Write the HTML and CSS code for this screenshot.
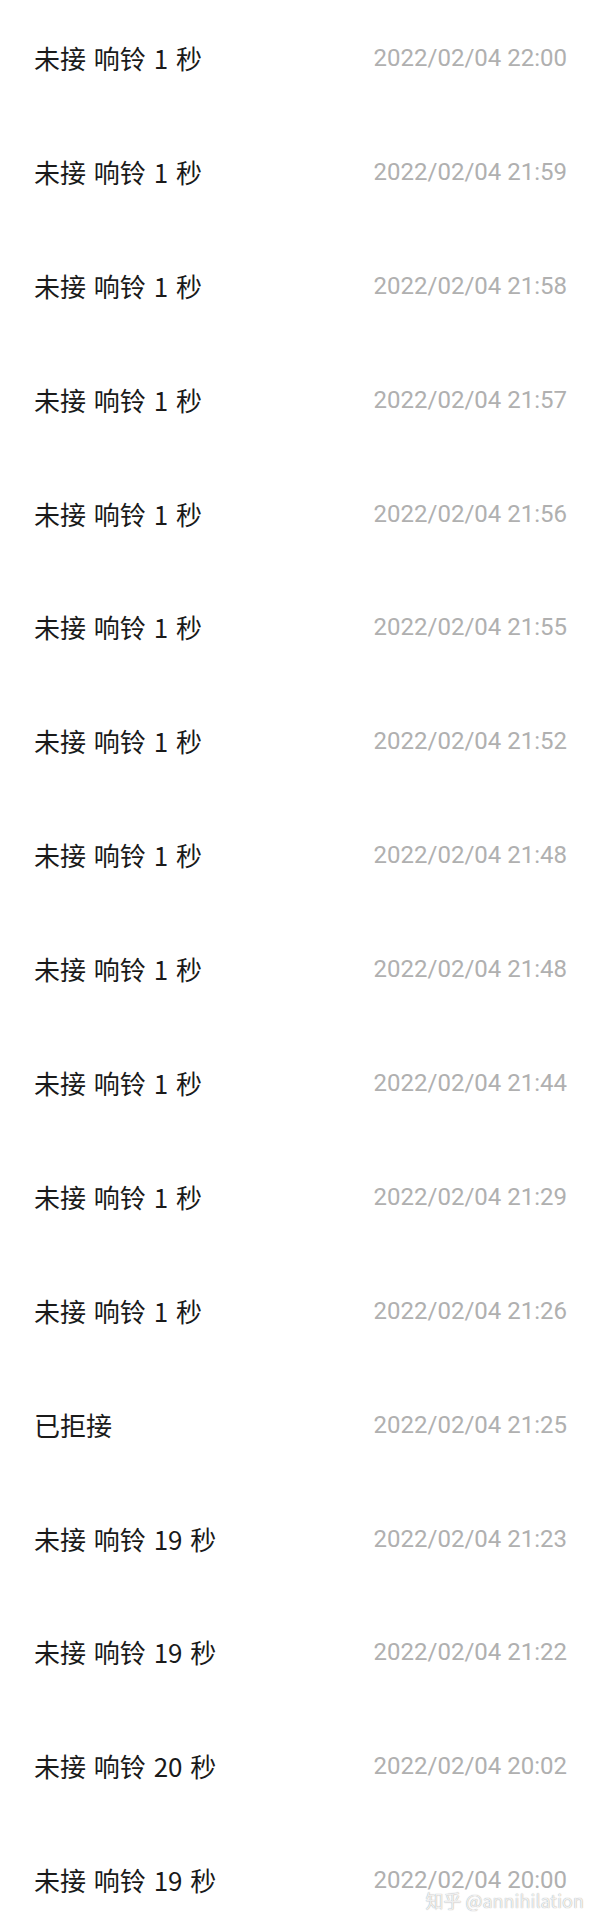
FILE: index.html
```html
<!DOCTYPE html>
<html lang="zh-CN">
<head>
    <meta charset="UTF-8"/>
    <meta name="viewport" content="width=device-width,initial-scale=1"/>
    <title>通话记录</title>
    <link rel="stylesheet" href="styles.css">
</head>
<body>
<ul class="calls">
    <li class="call"><span class="status">未接 响铃 1 秒</span><span class="time">2022/02/04 22:00</span></li>
    <li class="call"><span class="status">未接 响铃 1 秒</span><span class="time">2022/02/04 21:59</span></li>
    <li class="call"><span class="status">未接 响铃 1 秒</span><span class="time">2022/02/04 21:58</span></li>
    <li class="call"><span class="status">未接 响铃 1 秒</span><span class="time">2022/02/04 21:57</span></li>
    <li class="call"><span class="status">未接 响铃 1 秒</span><span class="time">2022/02/04 21:56</span></li>
    <li class="call"><span class="status">未接 响铃 1 秒</span><span class="time">2022/02/04 21:55</span></li>
    <li class="call"><span class="status">未接 响铃 1 秒</span><span class="time">2022/02/04 21:52</span></li>
    <li class="call"><span class="status">未接 响铃 1 秒</span><span class="time">2022/02/04 21:48</span></li>
    <li class="call"><span class="status">未接 响铃 1 秒</span><span class="time">2022/02/04 21:48</span></li>
    <li class="call"><span class="status">未接 响铃 1 秒</span><span class="time">2022/02/04 21:44</span></li>
    <li class="call"><span class="status">未接 响铃 1 秒</span><span class="time">2022/02/04 21:29</span></li>
    <li class="call"><span class="status">未接 响铃 1 秒</span><span class="time">2022/02/04 21:26</span></li>
    <li class="call"><span class="status">已拒接</span><span class="time">2022/02/04 21:25</span></li>
    <li class="call"><span class="status">未接 响铃 19 秒</span><span class="time">2022/02/04 21:23</span></li>
    <li class="call"><span class="status">未接 响铃 19 秒</span><span class="time">2022/02/04 21:22</span></li>
    <li class="call"><span class="status">未接 响铃 20 秒</span><span class="time">2022/02/04 20:02</span></li>
    <li class="call"><span class="status">未接 响铃 19 秒</span><span class="time">2022/02/04 20:00</span></li>
</ul>
<div class="watermark">知乎 @annihilation</div>
</body>
</html>
```

FILE: styles.css
```css
body { margin: 0; background: #fff; font-family: Roboto, "Noto Sans CJK SC", sans-serif; position: relative; height: 1923px; overflow: hidden; }
.calls { list-style: none; margin: 0; padding: 1px 33px 0 34px; }
.call { height: 113.9px; display: flex; align-items: center; justify-content: space-between; }
.status { font-family: "Noto Sans CJK SC", sans-serif; font-size: 26px; line-height: 30px; color: #1a1a1a; word-spacing: 2px; }
.time { font-size: 24px; line-height: 20px; color: #b0b0b0; }
.watermark { position: absolute; right: 16px; bottom: 15px; font-family: "Noto Sans CJK SC", sans-serif; font-size: 18px; line-height: 16px; color: rgba(255,255,255,.85); text-shadow: 0 0 1px rgba(0,0,0,.45); }
```
